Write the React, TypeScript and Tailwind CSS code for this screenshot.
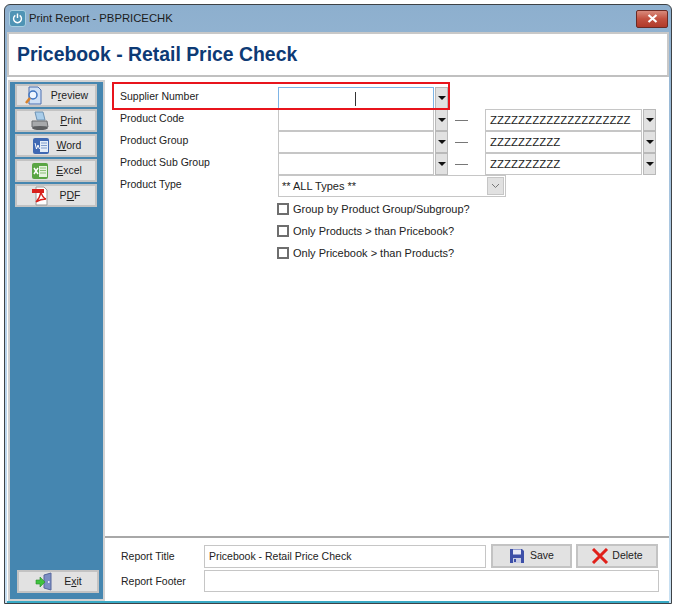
const font = { fontFamily: '"Liberation Sans", Arial, sans-serif' }

const PreviewIcon = () => (
    <svg width="20" height="20" viewBox="0 0 20 20">
        <path d="M5 1h9l3 3v14H5z" fill="#cfe0f5" stroke="#4a6fb0" />
        <circle cx="9" cy="9" r="4" fill="#eef6ff" stroke="#3e74c0" strokeWidth="1.5" />
        <path d="M6 12l-4 5" stroke="#d9822b" strokeWidth="2.5" />
    </svg>
)

const PrintIcon = () => (
    <svg width="20" height="20" viewBox="0 0 20 20">
        <path d="M5 1l8 0 2 8H7z" fill="#a9cdea" stroke="#6f93b3" />
        <path d="M2 10h15l1 6H2z" fill="#a7a9ab" stroke="#6a6c6e" />
        <ellipse cx="10" cy="17" rx="8" ry="2" fill="#5c5e60" />
    </svg>
)

const WordIcon = () => (
    <svg width="20" height="20" viewBox="0 0 20 20">
        <rect x="2" y="2" width="16" height="16" rx="2" fill="#3f68b3" />
        <rect x="9" y="5" width="8" height="11" fill="#e4edf8" />
        <path d="M10 7h6M10 9.5h6M10 12h6" stroke="#7f9ccc" />
        <path d="M4 7l1.5 6L7 9l1.5 4" stroke="#fff" fill="none" />
    </svg>
)

const ExcelIcon = () => (
    <svg width="20" height="20" viewBox="0 0 20 20">
        <rect x="2" y="2" width="16" height="16" rx="2" fill="#5aa544" />
        <rect x="9" y="5" width="8" height="11" fill="#e6f3e0" />
        <path d="M10 7h6M10 9.5h6M10 12h6" stroke="#8cc079" />
        <path d="M4 7l4 6M8 7l-4 6" stroke="#fff" strokeWidth="1.5" />
    </svg>
)

const PdfIcon = () => (
    <svg width="20" height="20" viewBox="0 0 20 20">
        <path d="M5 1h8l3 3v15H5z" fill="#fff" stroke="#9a9a9a" />
        <path d="M1 3h12v4H1z" fill="#d8201c" />
        <path d="M10 6c-1 5-3 8-5 10 3-2 6-3 10-3-3-1-4-3-5-7z" fill="none" stroke="#d8201c" strokeWidth="1.3" />
    </svg>
)

const ExitIcon = () => (
    <svg width="20" height="20" viewBox="0 0 20 20">
        <path d="M10 3l7-2v17l-7-2z" fill="#7c8fc4" stroke="#56679c" />
        <rect x="14" y="9" width="1.5" height="2" fill="#e8e8f5" />
        <path d="M2 8h4V5l5 5-5 5v-3H2z" fill="#3fc23f" stroke="#2a8f2a" strokeWidth="0.6" />
    </svg>
)

const SaveIcon = () => (
    <svg width="16" height="16" viewBox="0 0 16 16">
        <path d="M1 1h12l2 2v12H1z" fill="#3d4fa8" />
        <rect x="4" y="1.5" width="8" height="5" fill="#e6e8f5" />
        <rect x="4" y="10" width="8" height="5" fill="#c8cce4" />
        <rect x="5" y="11" width="2" height="3" fill="#3d4fa8" />
    </svg>
)

const DeleteIcon = () => (
    <svg width="18" height="16" viewBox="0 0 18 16">
        <path d="M2 1l14 14M16 1L2 15" stroke="#e0201a" strokeWidth="3" />
    </svg>
)

const Caret = () => (
    <span className="w-0 h-0 border-x-[4px] border-x-transparent border-t-[4px] border-t-[#111]" />
)

const Combo = ({ w, value, focus }: { w: string; value?: string; focus?: boolean }) => (
    <div className="flex h-[22px]">
        <div className={`${w} h-full border ${focus ? 'border-[#7db4e6]' : 'border-[#c6c6c6]'} bg-white pl-[4px] text-[11.5px] leading-[20px] text-[#222] overflow-hidden`}>
            {value}
        </div>
        <div className="ml-px w-[13px] h-full bg-[#e1e1e1] border border-[#b9b9b9] flex items-center justify-center">
            <Caret />
        </div>
    </div>
)

const Dash = () => <div className="w-[13px] h-px bg-[#777] ml-[7px] mr-[17px] self-center" />

const Row = ({ label, children }: { label: string; children: React.ReactNode }) => (
    <div className="flex h-[22px]">
        <div className="w-[173px] pl-[15px] text-[10.5px] leading-[19px] text-[#222]">{label}</div>
        {children}
    </div>
)

const Check = ({ label }: { label: string }) => (
    <div className="flex items-center h-[22px] pl-[172px]">
        <span className="w-[12px] h-[12px] border-2 border-[#6e6e6e] bg-white" />
        <span className="ml-[4px] text-[11px] text-[#222]">{label}</span>
    </div>
)

const SideButton = ({ icon, label, ul, gap }: { icon: React.ReactNode; label: string; ul: number; gap: string }) => (
    <div className="w-[82px] h-[23px] bg-[#e2e2e2] border-2 border-[#c3c3c3] flex items-center justify-center text-[10.5px] text-[#222]">
        {icon}
        <span className={gap}>
            {label.slice(0, ul)}
            <span className="underline">{label[ul]}</span>
            {label.slice(ul + 1)}
        </span>
    </div>
)

const App: React.FC = () => {
    return (
        <div className="w-[676px] h-[609px] bg-white pt-[4px] pl-[4px]" style={font}>
            <div className="w-[668px] h-[600px] flex flex-col rounded-t-[6px] border border-[#3d4246] bg-gradient-to-b from-[#8dafce] via-[#b5d0e8] to-[#c8e0f2] overflow-hidden">
                <div className="h-[27px] shrink-0 flex items-center pl-[4px] pr-[3px]">
                    <div className="w-[17px] h-[17px] rounded-[3px] bg-[#4f94b5] border border-[#a9cfe0] flex items-center justify-center">
                        <svg width="11" height="11" viewBox="0 0 10 10">
                            <path d="M3 2.2a3.6 3.6 0 1 0 4 0M5 0.5v4" stroke="#fff" strokeWidth="1.3" fill="none" />
                        </svg>
                    </div>
                    <span className="ml-[3px] text-[11.3px] text-[#1c1c1c]">Print Report - PBPRICECHK</span>
                    <div className="ml-auto w-[32px] h-[18px] rounded-[2px] border border-[#6b2a24] bg-gradient-to-b from-[#d88a7c] via-[#c2503f] to-[#b03a2a] flex items-center justify-center">
                        <svg width="11" height="9" viewBox="0 0 11 9">
                            <path d="M1.5 1l8 7M9.5 1l-8 7" stroke="#fff" strokeWidth="2.2" />
                        </svg>
                    </div>
                </div>

                <div className="flex-1 min-h-0 mx-[2px] bg-white flex flex-col border-b-2 border-[#38a9c4]">
                    <div className="h-[45px] shrink-0 border-2 border-t-[#c8c8c8] border-x-[#c8c8c8] border-b-[#c0c0c0] bg-white flex items-center pl-[8px] text-[19.4px] font-bold text-[#0d3a75]">
                        Pricebook - Retail Price Check
                    </div>

                    <div className="flex-1 min-h-0 flex pt-[3px]">
                        <div className="w-[97px] shrink-0 ml-px border-2 border-[#d2d2d2] bg-[#4586b0] flex flex-col pt-[2px] pl-[5px] pb-[6px]">
                            <div className="flex flex-col gap-[2px]">
                                <SideButton icon={<PreviewIcon />} label="Preview" ul={1} gap="ml-[7px]" />
                                <SideButton icon={<PrintIcon />} label="Print" ul={0} gap="ml-[10px]" />
                                <SideButton icon={<WordIcon />} label="Word" ul={0} gap="ml-[6px]" />
                                <SideButton icon={<ExcelIcon />} label="Excel" ul={0} gap="ml-[6px]" />
                                <SideButton icon={<PdfIcon />} label="PDF" ul={1} gap="ml-[8px]" />
                            </div>
                            <div className="mt-auto ml-[2px]">
                                <SideButton icon={<ExitIcon />} label="Exit" ul={1} gap="ml-[10px]" />
                            </div>
                        </div>

                        <div className="flex-1 min-w-0 flex flex-col relative">
                            <div className="absolute left-[7px] top-[2px] w-[338px] h-[28px] border-2 border-[#e8141c]" />
                            <div className="absolute left-[250px] top-[12px] w-px h-[14px] bg-[#333]" />

                            <div className="flex-1 pt-[7px]">
                                <Row label="Supplier Number">
                                    <Combo w="w-[156px]" focus />
                                </Row>
                                <Row label="Product Code">
                                    <Combo w="w-[156px]" />
                                    <Dash />
                                    <Combo w="w-[157px]" value="ZZZZZZZZZZZZZZZZZZZZ" />
                                </Row>
                                <Row label="Product Group">
                                    <Combo w="w-[156px]" />
                                    <Dash />
                                    <Combo w="w-[157px]" value="ZZZZZZZZZZ" />
                                </Row>
                                <Row label="Product Sub Group">
                                    <Combo w="w-[156px]" />
                                    <Dash />
                                    <Combo w="w-[157px]" value="ZZZZZZZZZZ" />
                                </Row>
                                <Row label="Product Type">
                                    <div className="w-[228px] h-[22px] border border-[#c6c6c6] bg-white pl-[3px] pr-px flex items-center justify-between text-[11px] text-[#222]">
                                        <span>** ALL Types **</span>
                                        <div className="w-[17px] h-[18px] bg-[#e1e1e1] border border-[#c6c6c6] flex items-center justify-center">
                                            <svg width="9" height="6" viewBox="0 0 9 6">
                                                <path d="M1 1l3.5 3.5L8 1" stroke="#777" fill="none" />
                                            </svg>
                                        </div>
                                    </div>
                                </Row>
                                <div className="pt-[1px]">
                                    <Check label="Group by Product Group/Subgroup?" />
                                    <Check label="Only Products > than Pricebook?" />
                                    <Check label="Only Pricebook > than Products?" />
                                </div>
                            </div>

                            <div className="border-t-2 border-[#a8a8a8] h-[65px] shrink-0 pt-[7px] pl-px text-[10.5px] text-[#222]">
                                <div className="flex h-[25px]">
                                    <div className="w-[98px] pl-[15px] leading-[22px]">Report Title</div>
                                    <div className="w-[282px] h-[23px] border border-[#c6c6c6] bg-white pl-[4px] leading-[21px]">Pricebook - Retail Price Check</div>
                                    <div className="w-[81px] h-[24px] -mt-px ml-[5px] bg-[#e2e2e2] border-2 border-[#c3c3c3] flex items-center justify-center">
                                        <SaveIcon />
                                        <span className="ml-[5px]">Save</span>
                                    </div>
                                    <div className="w-[82px] h-[24px] -mt-px ml-[4px] bg-[#e2e2e2] border-2 border-[#c3c3c3] flex items-center justify-center">
                                        <DeleteIcon />
                                        <span className="ml-[3px]">Delete</span>
                                    </div>
                                </div>
                                <div className="flex h-[22px]">
                                    <div className="w-[98px] pl-[15px] leading-[22px]">Report Footer</div>
                                    <div className="w-[455px] h-[22px] border border-[#c6c6c6] bg-white" />
                                </div>
                            </div>
                        </div>
                    </div>
                </div>
            </div>
        </div>
    )
}

export default App
